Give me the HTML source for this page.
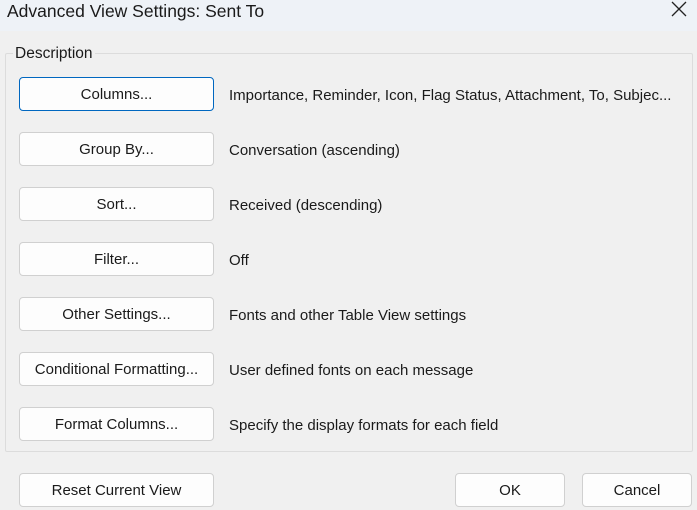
<!DOCTYPE html>
<html><head><style>
body{margin:0;width:697px;height:510px;background:#f0f0f0;font-family:"Liberation Sans",sans-serif;font-size:15px;color:#1a1a1a;position:relative;overflow:hidden}
.title{position:absolute;left:0;top:0;width:697px;height:31px;background:#eef2f7}
.title span{position:absolute;left:7px;top:1px;font-size:17.5px;color:#1a1a1a}
.x{position:absolute;right:10px;top:1px;width:16px;height:16px}
.grp{position:absolute;left:5px;top:53px;width:686px;height:397px;border:1px solid #dcdcdc;border-radius:2px}
.lg{position:absolute;left:13px;top:45px;background:#f0f0f0;padding:0 2px;font-size:15.5px}
.b{position:absolute;left:19px;width:193px;height:32px;background:#fdfdfd;border:1px solid #d0d0d0;border-radius:4px;text-align:center;line-height:34px;box-sizing:content-box}
.b.f{border-color:#0067c0}
.d{position:absolute;left:229px;white-space:nowrap;margin-top:1px}
</style></head><body>
<div class="title"><span>Advanced View Settings: Sent To</span>
<svg class="x" viewBox="0 0 16 16" style="top:1px"><path d="M1 1L15 15M15 1L1 15" stroke="#222" stroke-width="1.3"/></svg></div>
<div class="grp"></div><div class="lg">Description</div>
<div class="b f" style="top:77px">Columns...</div><div class="d" style="top:86px">Importance, Reminder, Icon, Flag Status, Attachment, To, Subjec...</div>
<div class="b" style="top:132px">Group By...</div><div class="d" style="top:141px">Conversation (ascending)</div>
<div class="b" style="top:187px">Sort...</div><div class="d" style="top:196px">Received (descending)</div>
<div class="b" style="top:242px">Filter...</div><div class="d" style="top:251px">Off</div>
<div class="b" style="top:297px">Other Settings...</div><div class="d" style="top:306px">Fonts and other Table View settings</div>
<div class="b" style="top:352px">Conditional Formatting...</div><div class="d" style="top:361px">User defined fonts on each message</div>
<div class="b" style="top:407px">Format Columns...</div><div class="d" style="top:416px">Specify the display formats for each field</div>
<div class="b" style="top:473px">Reset Current View</div>
<div class="b" style="top:473px;left:455px;width:108px">OK</div>
<div class="b" style="top:473px;left:582px;width:108px">Cancel</div>
</body></html>
